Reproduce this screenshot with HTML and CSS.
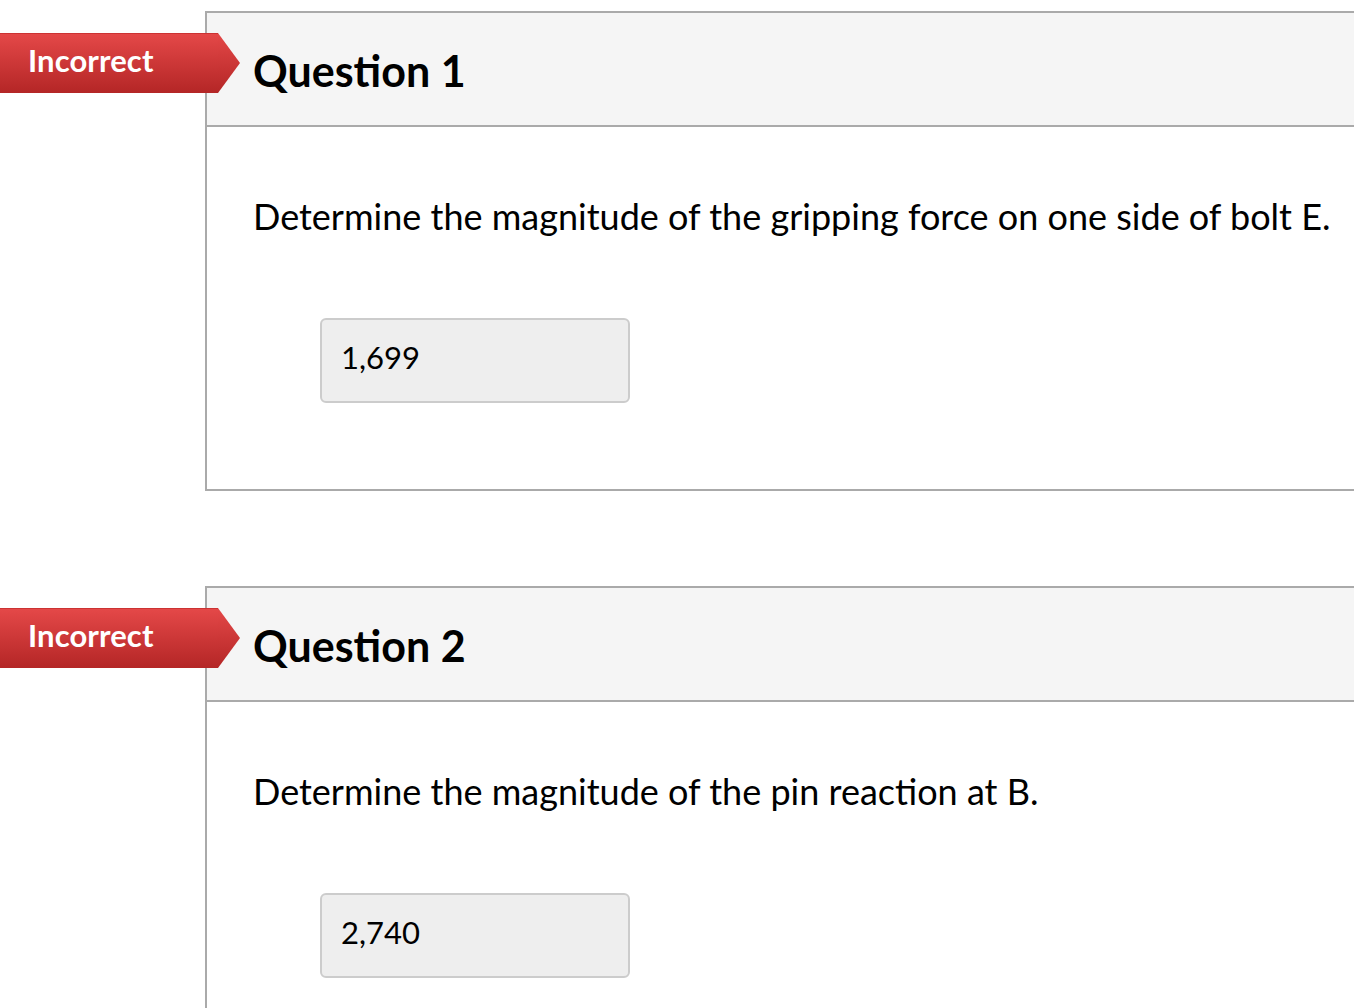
FILE: index.html
```html
<!DOCTYPE html>
<html>
<head>
<meta charset="utf-8">
<link rel="stylesheet" href="styles.css">
</head>
<body>
<div class="page">
  <div class="question">
    <div class="badge"><span class="badge-text">Incorrect</span></div>
    <div class="q-header"><h2 class="q-title">Question 1</h2></div>
    <div class="q-body">
      <p class="q-text">Determine the magnitude of the gripping force on one side of bolt E.</p>
      <div class="answer">1,699</div>
    </div>
  </div>
  <div class="question">
    <div class="badge"><span class="badge-text">Incorrect</span></div>
    <div class="q-header"><h2 class="q-title">Question 2</h2></div>
    <div class="q-body">
      <p class="q-text">Determine the magnitude of the pin reaction at B.</p>
      <div class="answer">2,740</div>
    </div>
  </div>
</div>
</body>
</html>
```
FILE: styles.css
```css
html, body {
  margin: 0;
  padding: 0;
  background: #fff;
  overflow: hidden;
  font-family: Lato, "Liberation Sans", sans-serif;
  color: #111;
}
.page {
  padding-top: 11px;
  display: flex;
  flex-direction: column;
  gap: 95px;
}
.question {
  position: relative;
  margin-left: 205px;
  width: 1300px;
  border: 2px solid #aaa;
  background: #fff;
}
.badge {
  position: absolute;
  left: -207px;
  top: 20px;
  width: 218px;
  height: 60px;
  background: linear-gradient(#e44848, #b42626);
  border-top: 1px solid #c33;
  box-sizing: border-box;
  display: flex;
  align-items: center;
  padding-left: 28px;
  z-index: 2;
}
.badge::after {
  content: "";
  position: absolute;
  right: -22px;
  top: -1px;
  width: 22px;
  height: 60px;
  background: linear-gradient(#e44848, #b42626);
  clip-path: polygon(0 0, 100% 50%, 0 100%);
}
.badge-text {
  color: #fff;
  font-weight: 700;
  font-size: 31px;
  letter-spacing: 0.1px;
  line-height: 1;
  margin-top: -7px;
}
.q-header {
  background: #f5f5f5;
  border-bottom: 2px solid #aaa;
  height: 112px;
  display: flex;
  align-items: center;
  padding-left: 46px;
}
.q-title {
  margin: 0;
  font-size: 43px;
  font-weight: 700;
  line-height: 1;
  color: #000;
  margin-top: 2px;
}
.q-body {
  height: 362px;
  padding-left: 46px;
  box-sizing: border-box;
  padding-top: 67px;
}
.q-text {
  margin: 0;
  font-size: 36px;
  line-height: 44px;
  color: #000;
}
.answer {
  margin-top: 80px;
  margin-left: 67px;
  width: 310px;
  height: 85px;
  box-sizing: border-box;
  background: #eee;
  border: 2px solid #ccc;
  border-radius: 6px;
  font-size: 31px;
  display: flex;
  align-items: center;
  padding-left: 19px;
  padding-bottom: 8px;
  color: #000;
}
```
